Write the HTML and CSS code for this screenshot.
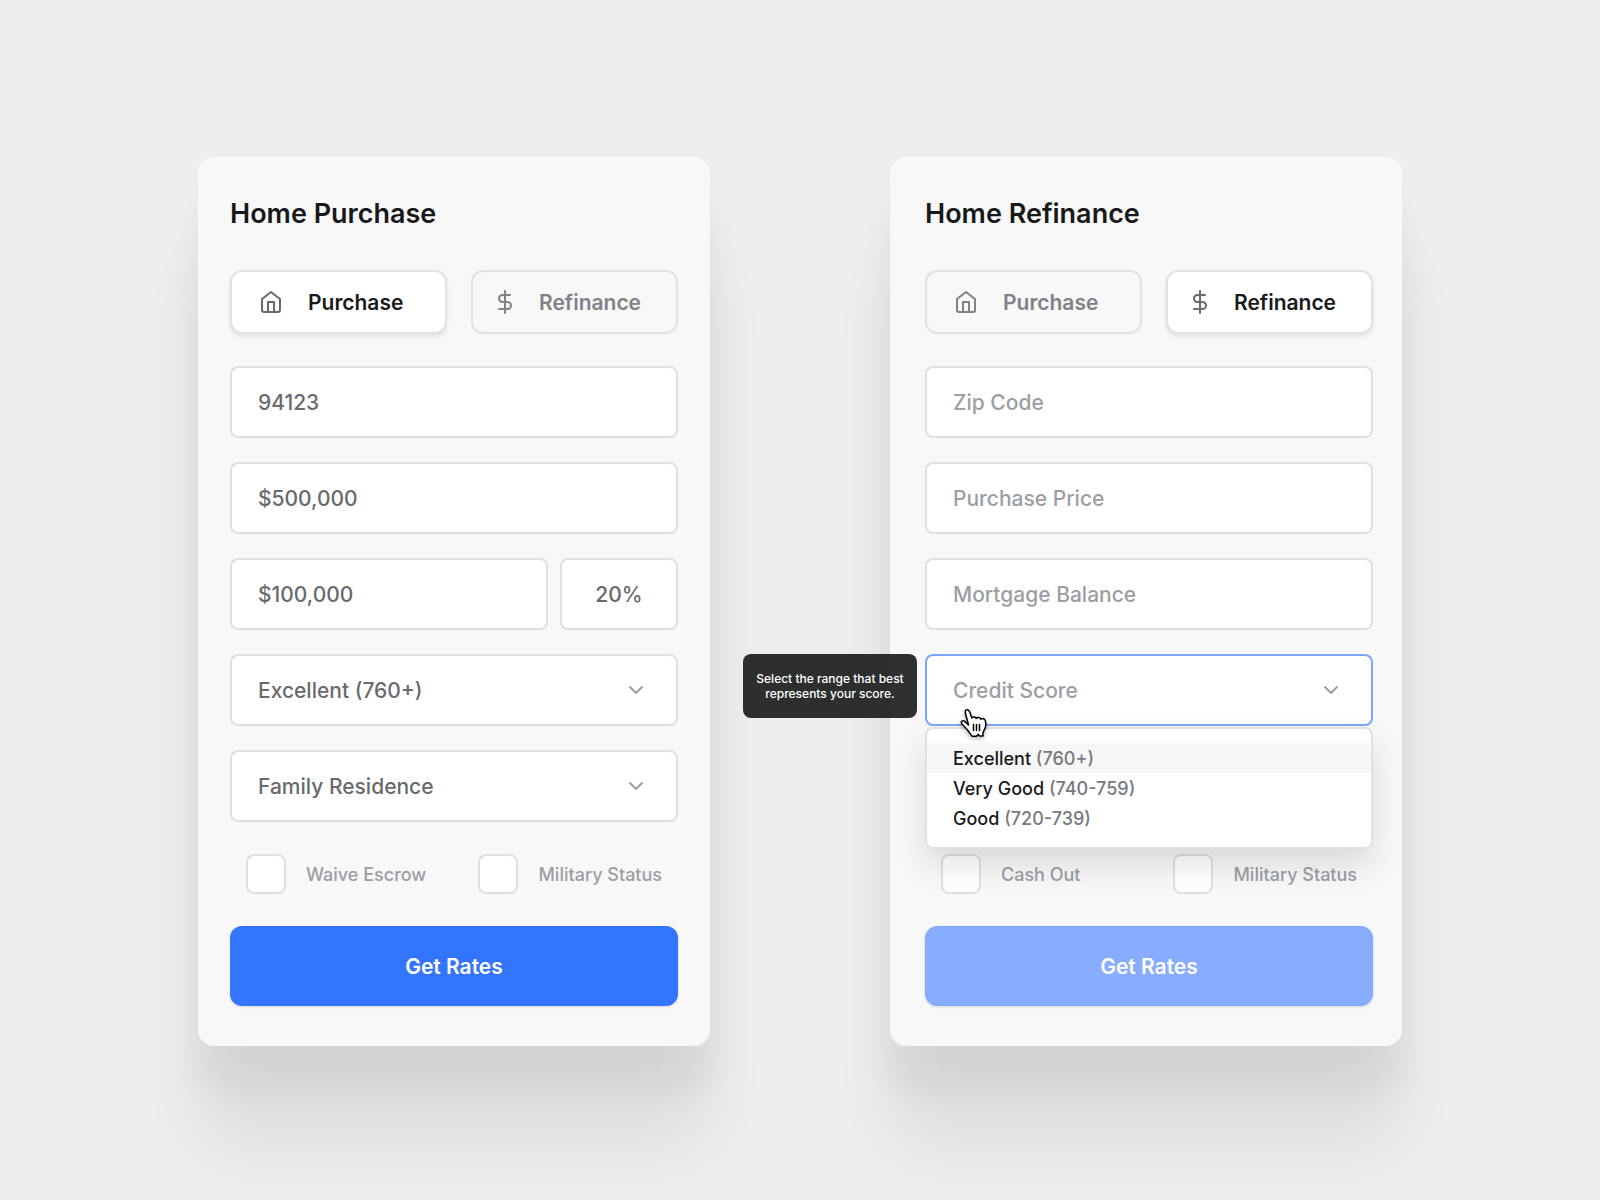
FILE: index.html
```html
<!DOCTYPE html>
<html lang="en">
<head>
<meta charset="utf-8">
<meta name="viewport" content="width=device-width, initial-scale=1">
<title>Mortgage Rates</title>
<link rel="stylesheet" href="styles.css">
</head>
<body>
<svg class="sprite" aria-hidden="true">
  <symbol id="icon-home" viewBox="0 0 24 24"><path d="M3 9l9-7 9 7v11a2 2 0 0 1-2 2H5a2 2 0 0 1-2-2z"/><path d="M9 22V12h6v10"/></symbol>
  <symbol id="icon-dollar" viewBox="0 0 24 24"><path d="M12 1v22"/><path d="M17 5H9.500a3.500 3.500 0 0 0 0 7h5a3.500 3.500 0 0 1 0 7H6"/></symbol>
  <symbol id="icon-chevron" viewBox="0 0 16 16"><path d="m2 5 6 6 6-6"/></symbol>
</svg>
<main class="page">
  <form class="card">
    <h1 class="title">Home Purchase</h1>
    <div class="tabs">
      <button type="button" class="tab tab-home tab-active"><svg class="icon"><use href="#icon-home"/></svg>Purchase</button>
      <button type="button" class="tab tab-dollar"><svg class="icon"><use href="#icon-dollar"/></svg>Refinance</button>
    </div>
    <div class="fields">
      <input class="field" type="text" aria-label="Zip Code" value="94123">
      <input class="field" type="text" aria-label="Purchase Price" value="$500,000">
      <div class="split">
        <input class="field" type="text" aria-label="Down Payment" value="$100,000">
        <input class="field field-center" type="text" aria-label="Down Payment Percent" value="20%">
      </div>
      <div class="select">
        <select class="field" aria-label="Credit Score"><option>Excellent (760+)</option></select>
        <svg class="chevron"><use href="#icon-chevron"/></svg>
      </div>
      <div class="select">
        <select class="field" aria-label="Property Type"><option>Family Residence</option></select>
        <svg class="chevron"><use href="#icon-chevron"/></svg>
      </div>
    </div>
    <div class="checks">
      <label class="check"><input type="checkbox" class="box">Waive Escrow</label>
      <label class="check"><input type="checkbox" class="box">Military Status</label>
    </div>
    <button type="button" class="submit">Get Rates</button>
  </form>

  <form class="card card-refinance">
    <h1 class="title">Home Refinance</h1>
    <div class="tabs">
      <button type="button" class="tab tab-home"><svg class="icon"><use href="#icon-home"/></svg>Purchase</button>
      <button type="button" class="tab tab-dollar tab-active"><svg class="icon"><use href="#icon-dollar"/></svg>Refinance</button>
    </div>
    <div class="fields">
      <input class="field" type="text" aria-label="Zip Code" placeholder="Zip Code">
      <input class="field" type="text" aria-label="Purchase Price" placeholder="Purchase Price">
      <input class="field" type="text" aria-label="Mortgage Balance" placeholder="Mortgage Balance">
      <div class="select">
        <select class="field field-open" aria-label="Credit Score" aria-describedby="score-tip"><option>Credit Score</option></select>
        <svg class="chevron"><use href="#icon-chevron"/></svg>
        <div class="tooltip" role="tooltip" id="score-tip">Select the range that best represents your score.</div>
        <ul class="menu" role="listbox" aria-label="Credit Score">
          <li class="option option-hover" role="option">Excellent <span class="range">(760+)</span></li>
          <li class="option" role="option">Very Good <span class="range">(740-759)</span></li>
          <li class="option" role="option">Good <span class="range">(720-739)</span></li>
        </ul>
        <svg class="cursor" viewBox="0 0 28 30" aria-hidden="true">
          <path d="M9.600 17 L6.700 6.500 C5.800 3.400 6.200 2 7.700 1.700 C9.200 1.400 10.200 2.600 10.800 4.300 L12.900 10 C13.300 8.600 16.700 8.500 17.300 10.400 C18 9.100 21.200 9.300 21.900 11.200 C23 10.100 25.900 10.600 26.400 12.800 C27 15.400 27 17.400 26.200 19.900 C25.600 21.700 24.200 23.300 24 24.900 V28 H20.600 L19.200 26.400 L17.400 28.200 H13.200 C11.600 26.800 10.400 24.400 8.700 22.200 C7.200 20.200 5.600 19.200 4.300 17.400 L2.500 15.200 C1.600 13.600 3.700 12.100 5.400 13.100 Z"/>
          <path d="M14.500 16.500v6M17.500 16.500v6M20.500 16.500v6"/>
        </svg>
      </div>
    </div>
    <div class="checks checks-last">
      <label class="check"><input type="checkbox" class="box">Cash Out</label>
      <label class="check"><input type="checkbox" class="box">Military Status</label>
    </div>
    <button type="button" class="submit" disabled>Get Rates</button>
  </form>
</main>
</body>
</html>
```
FILE: styles.css
```css
* { box-sizing: border-box; }

body {
  margin: 0;
  background: #eceef0;
  color: #18191b;
  font-family: Inter, "Liberation Sans", sans-serif;
  font-weight: 500;
}

button, input, select { font: inherit; margin: 0; }

.sprite { position: absolute; width: 0; height: 0; }

.page {
  min-height: 100vh;
  display: flex;
  flex-wrap: wrap;
  justify-content: center;
  align-items: center;
  align-content: center;
  gap: 180px;
  overflow: hidden;
}

.card {
  flex: 0 1 512px;
  align-self: stretch;
  display: flex;
  flex-direction: column;
  margin: 157px 0 154px;
  padding: 40px 32px;
  border-radius: 16px;
  background: #f8f8f8;
  box-shadow: 0 42px 34px rgba(0, 0, 0, 0.05), 0 100px 80px rgba(0, 0, 0, 0.07);
}

.card-refinance { padding-left: 35px; padding-right: 29px; }

.title {
  margin: 0 0 39px;
  font-size: 27px;
  line-height: 34px;
  font-weight: 600;
}

.tabs {
  display: grid;
  grid-template-columns: 217fr 207fr;
  gap: 24px;
  margin-bottom: 32px;
}

.tab {
  display: flex;
  align-items: center;
  gap: 25px;
  height: 64px;
  padding: 0 20px;
  border: 2px solid #e2e2e2;
  border-radius: 12px;
  background: transparent;
  color: #808288;
  font-size: 21px;
  font-weight: 600;
}

.tab-home { padding-left: 27px; }

.tab-dollar { gap: 22px; }

.tab-active {
  background: #fff;
  color: #18191b;
  box-shadow: 0 3px 4px rgba(0, 0, 0, 0.08);
}

.icon {
  width: 24px;
  height: 24px;
  fill: none;
  stroke: #808288;
  stroke-width: 2;
  stroke-linecap: round;
  stroke-linejoin: round;
}

.tab-active .icon { stroke: #696a6e; }

.fields {
  display: flex;
  flex-direction: column;
  gap: 24px;
}

.field {
  width: 100%;
  height: 72px;
  padding: 0 26px;
  border: 2px solid #e0e0e0;
  border-radius: 8px;
  outline: none;
  background: #fff;
  color: #696a6e;
  font-size: 21px;
  appearance: none;
}

.field::placeholder { color: #9c9ea3; opacity: 1; }

.field-center { padding: 0; text-align: center; }

.field-open { border-color: #7ba6ff; color: #9c9ea3; }

.split {
  display: grid;
  grid-template-columns: 1fr 118px;
  gap: 12px;
}

.select {
  position: relative;
  display: grid;
  align-items: center;
}

.select .field, .chevron { grid-area: 1 / 1; }

.chevron {
  justify-self: end;
  width: 16px;
  height: 16px;
  margin-right: 34px;
  fill: none;
  stroke: #9c9ea3;
  stroke-width: 2;
  stroke-linecap: round;
  stroke-linejoin: round;
  pointer-events: none;
}

.tooltip {
  position: absolute;
  z-index: 2;
  top: 0;
  right: calc(100% + 8px);
  width: 174px;
  padding: 17px 8px;
  border-radius: 8px;
  background: rgba(24, 25, 25, 0.9);
  color: #fff;
  font-size: 12px;
  line-height: 15px;
  text-align: center;
}

.menu {
  position: absolute;
  z-index: 1;
  top: calc(100% + 1px);
  left: 0;
  right: 0;
  margin: 0;
  padding: 14px 0;
  list-style: none;
  border: 2px solid #e0e0e0;
  border-radius: 8px;
  background: #fff;
  box-shadow: 0 16px 32px rgba(0, 0, 0, 0.12);
}

.option {
  padding: 2px 26px 0;
  font-size: 18px;
  line-height: 28px;
}

.option-hover { background: #f7f7f7; }

.range { color: #77797f; }

.cursor {
  position: absolute;
  z-index: 3;
  top: 54px;
  left: 34px;
  width: 28px;
  height: 30px;
  fill: #fff;
  stroke: #000;
  stroke-width: 1.5;
  stroke-linecap: round;
  stroke-linejoin: round;
  filter: drop-shadow(0 2px 2px rgba(0, 0, 0, 0.3));
}

.checks {
  display: flex;
  justify-content: space-between;
  margin: 32px 0;
  padding: 0 16px;
}

.checks-last { margin-top: auto; }

.check {
  display: flex;
  align-items: center;
  gap: 20px;
  color: #9c9ea3;
  font-size: 18px;
}

.box {
  width: 40px;
  height: 40px;
  border: 2px solid #e0e0e0;
  border-radius: 8px;
  background: #fff;
  appearance: none;
}

.submit {
  width: 100%;
  height: 80px;
  border: 0;
  border-radius: 12px;
  background: #3375ff;
  color: #fff;
  font-size: 21px;
  font-weight: 600;
  box-shadow: 0 1px 3px rgba(0, 0, 0, 0.12);
}

.submit:disabled {
  border: 1px solid #7fa7ff;
  background: #88adff;
}
```
